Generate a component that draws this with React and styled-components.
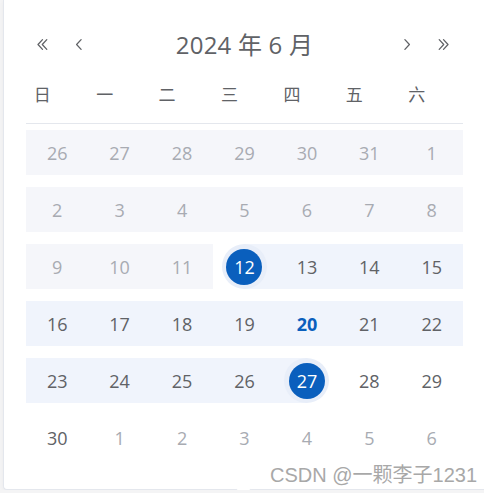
import React from 'react';
import styled, { createGlobalStyle } from 'styled-components';

const colors = {
    text: '#606266',
    muted: '#a8abb2',
    line: '#e4e7ed',
    disabled: '#f5f6fa',
    range: '#f0f4fc',
    halo: '#e8eef9',
    primary: '#0a5fbd',
};

const Global = createGlobalStyle`
    html, body { margin: 0; padding: 0; overflow: hidden; background: #f4f4f5; }
    body { font-family: "Open Sans", "Noto Sans CJK SC", sans-serif; }
`;

const Panel = styled.div`
    position: relative;
    box-sizing: border-box;
    margin-left: 3px;
    width: 500px;
    height: 490px;
    background: #fff;
    border-left: 1px solid ${colors.line};
    border-bottom: 1px solid ${colors.line};
    border-bottom-left-radius: 4px;
    padding: 23px 0 0 22px;
    box-shadow: 0 1px 4px rgba(0,0,0,0.04);
`;

const Arrow = styled.span`
    position: absolute;
    left: 234px;
    bottom: -6px;
    width: 10px;
    height: 10px;
    background: #fff;
    border-right: 1px solid ${colors.line};
    border-bottom: 1px solid ${colors.line};
    transform: rotate(45deg);
`;

const Body = styled.div`
    width: 437px;
`;

const Header = styled.div`
    display: grid;
    grid-template-columns: 1fr auto 1fr;
    align-items: center;
    height: 40px;
`;

const NavGroup = styled.div`
    display: flex;
    align-items: center;
    gap: 17px;
    justify-content: ${p => (p.$right ? 'flex-end' : 'flex-start')};
    padding: ${p => (p.$right ? '2px 10px 0 0' : '2px 0 0 6px')};
`;

const NavButton = styled.button`
    width: 20px;
    height: 20px;
    padding: 0;
    border: 0;
    background: none;
    color: ${colors.text};
    display: flex;
    align-items: center;
    justify-content: center;
    cursor: pointer;
`;

const Title = styled.div`
    font-size: 24px;
    color: ${colors.text};
    letter-spacing: 0.2px;
`;

const WeekRow = styled.div`
    display: grid;
    grid-template-columns: repeat(7, 1fr);
    width: 437px;
    height: 34px;
    margin: 13px 0 0 -15px;
    align-items: center;
`;

const WeekDay = styled.span`
    text-align: center;
    font-size: 17px;
    color: ${colors.text};
`;

const Divider = styled.div`
    height: 1px;
    background: ${colors.line};
    margin-top: 13px;
`;

const Weeks = styled.div`
    display: flex;
    flex-direction: column;
    gap: 12px;
    margin-top: 6px;
`;

const Week = styled.div`
    display: grid;
    grid-template-columns: repeat(7, 1fr);
    height: 45px;
`;

const fills = {
    disabled: colors.disabled,
    range: colors.range,
    start: `linear-gradient(to right, transparent 50%, ${colors.range} 50%)`,
    end: `linear-gradient(to right, ${colors.range} 50%, transparent 50%)`,
    none: 'transparent',
};

const Cell = styled.div`
    display: flex;
    align-items: center;
    justify-content: center;
    background: ${p => fills[p.$fill]};
`;

const Halo = styled.span`
    width: 45px;
    height: 45px;
    border-radius: 50%;
    background: ${colors.halo};
    display: flex;
    align-items: center;
    justify-content: center;
`;

const Num = styled.span`
    width: 36px;
    height: 36px;
    border-radius: 50%;
    display: flex;
    align-items: center;
    justify-content: center;
    font-size: 18px;
    color: ${p => (p.$picked ? '#fff' : p.$today ? colors.primary : p.$muted ? colors.muted : colors.text)};
    background: ${p => (p.$picked ? colors.primary : 'transparent')};
    font-weight: ${p => (p.$today ? 700 : p.$picked ? 500 : 400)};
`;

const Mark = styled.div`
    position: absolute;
    left: 266px;
    top: 459px;
    font-family: "Liberation Sans", "Noto Sans CJK SC", sans-serif;
    font-size: 20px;
    color: #a8a8a8;
    text-shadow: 0 0 2px #fff;
    white-space: nowrap;
`;

const Chevron = ({ double, right }) => (
    <svg width="15" height="15" viewBox="0 0 14 14" fill="none" stroke="currentColor" strokeWidth="1.2" strokeLinecap="round" strokeLinejoin="round"
        style={{ transform: right ? 'scaleX(-1)' : 'none' }}>
        {double ? (
            <>
                <path d="M7 2.5 L2.8 7 L7 11.5" />
                <path d="M11 2.5 L6.8 7 L11 11.5" />
            </>
        ) : (
            <path d="M8.5 2.5 L4.3 7 L8.5 11.5" />
        )}
    </svg>
);

const weekdays = ['日', '一', '二', '三', '四', '五', '六'];

// each day: [label, muted, fill, picked, today]
const weeks = [
    [[26, 1, 'disabled'], [27, 1, 'disabled'], [28, 1, 'disabled'], [29, 1, 'disabled'], [30, 1, 'disabled'], [31, 1, 'disabled'], [1, 1, 'disabled']],
    [[2, 1, 'disabled'], [3, 1, 'disabled'], [4, 1, 'disabled'], [5, 1, 'disabled'], [6, 1, 'disabled'], [7, 1, 'disabled'], [8, 1, 'disabled']],
    [[9, 1, 'disabled'], [10, 1, 'disabled'], [11, 1, 'disabled'], [12, 0, 'start', 1], [13, 0, 'range'], [14, 0, 'range'], [15, 0, 'range']],
    [[16, 0, 'range'], [17, 0, 'range'], [18, 0, 'range'], [19, 0, 'range'], [20, 0, 'range', 0, 1], [21, 0, 'range'], [22, 0, 'range']],
    [[23, 0, 'range'], [24, 0, 'range'], [25, 0, 'range'], [26, 0, 'range'], [27, 0, 'end', 1], [28, 0, 'none'], [29, 0, 'none']],
    [[30, 0, 'none'], [1, 1, 'none'], [2, 1, 'none'], [3, 1, 'none'], [4, 1, 'none'], [5, 1, 'none'], [6, 1, 'none']],
];

const App = () => {
    return (
        <>
            <Global />
            <Panel>
                <Body>
                    <Header>
                        <NavGroup>
                            <NavButton type="button"><Chevron double /></NavButton>
                            <NavButton type="button"><Chevron /></NavButton>
                        </NavGroup>
                        <Title>2024 年 6 月</Title>
                        <NavGroup $right>
                            <NavButton type="button"><Chevron right /></NavButton>
                            <NavButton type="button"><Chevron double right /></NavButton>
                        </NavGroup>
                    </Header>
                    <WeekRow>
                        {weekdays.map(d => <WeekDay key={d}>{d}</WeekDay>)}
                    </WeekRow>
                    <Divider />
                    <Weeks>
                        {weeks.map((week, i) => (
                            <Week key={i}>
                                {week.map(([label, muted, fill, picked, today], j) => {
                                    const num = <Num $muted={!!muted} $picked={!!picked} $today={!!today}>{label}</Num>;
                                    return (
                                        <Cell key={j} $fill={fill}>
                                            {picked ? <Halo>{num}</Halo> : num}
                                        </Cell>
                                    );
                                })}
                            </Week>
                        ))}
                    </Weeks>
                </Body>
                <Arrow />
                <Mark>CSDN @一颗李子1231</Mark>
            </Panel>
        </>
    );
};

export default App;
